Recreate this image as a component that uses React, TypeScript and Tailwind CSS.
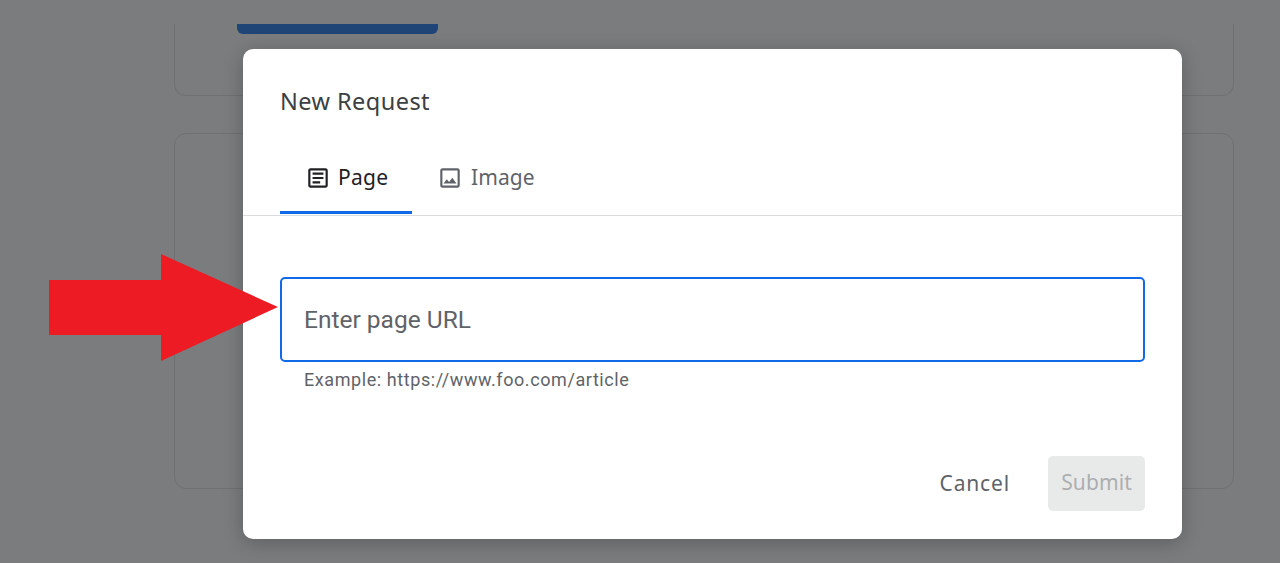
const DISPLAY_FONT = "font-['Noto_Sans',sans-serif]";

function PageIcon({ className }: { className?: string }) {
    return (
        <svg viewBox="0 0 24 24" className={className} fill="currentColor">
            <path d="M19 5v14H5V5h14m0-2H5c-1.1 0-2 .9-2 2v14c0 1.1.9 2 2 2h14c1.1 0 2-.9 2-2V5c0-1.100-.9-2-2-2z" />
            <path d="M14 17H7v-2h7v2zm3-4H7v-2h10v2zm0-4H7V7h10v2z" />
        </svg>
    );
}

function PhotoIcon({ className }: { className?: string }) {
    return (
        <svg viewBox="0 0 24 24" className={className} fill="currentColor">
            <path d="M19 5v14H5V5h14m0-2H5c-1.1 0-2 .9-2 2v14c0 1.100.9 2 2 2h14c1.100 0 2-.9 2-2V5c0-1.100-.9-2-2-2z" />
            <path d="M14.14 11.86l-3 3.870L9 13.140 6 17h12l-3.860-5.140z" />
        </svg>
    );
}

function Arrow() {
    return (
        <svg viewBox="0 0 229 108" className="absolute left-[49px] top-[254px] h-[108px] w-[229px]">
            <polygon points="0,26 112,26 112,0 229,53 112,107 112,81 0,81" fill="#ed1c24" />
        </svg>
    );
}

export default function App() {
    return (
        <div className="relative h-[563px] w-[1280px] overflow-hidden bg-[#7b7c7e] font-['Roboto',sans-serif]">
            {/* Page behind the dialog */}
            <div className="flex h-full flex-col gap-[37px] pl-[174px] pr-[46px] pt-[24px]">
                <div className="h-[72px] rounded-b-[12px] border border-t-0 border-[#707173] pl-[62px]">
                    <div className="h-[10px] w-[201px] rounded-b-[6px] bg-[#1f4577]" />
                </div>
                <div className="h-[356px] rounded-[12px] border border-[#707173]" />
            </div>

            {/* Dialog */}
            <div className="absolute left-[243px] top-[49px] flex h-[490px] w-[939px] flex-col rounded-[10px] bg-white shadow-[0_4px_20px_rgba(0,0,0,0.24)]">
                <h2 className={`pl-[37px] pt-[36px] text-[23.500px] leading-[32px] font-[450] tracking-[0.45px] text-[#3c4043] ${DISPLAY_FONT}`}>New Request</h2>

                <div className="mt-[28px] flex h-[71px] border-b border-[#dadce0] pl-[37px]">
                    <div className={`flex h-[69px] w-[132px] items-center gap-[7px] border-b-[3px] border-[#1069e6] pb-[1px] pl-[25px] text-[21px] tracking-[0.3px] text-[#202124] ${DISPLAY_FONT}`}>
                        <PageIcon className="h-[26px] w-[26px]" />
                        Page
                    </div>
                    <div className={`flex h-[69px] items-center gap-[8px] pb-[4px] pl-[25px] text-[21px] tracking-[0.1px] text-[#5f6368] ${DISPLAY_FONT}`}>
                        <PhotoIcon className="h-[26px] w-[26px]" />
                        Image
                    </div>
                </div>

                <div className="pl-[37px] pr-[37px] pt-[61px]">
                    <div className="flex h-[85px] items-center rounded-[5px] border-2 border-[#1069e6] pl-[22px] pt-[1px] text-[24.500px] text-[#5f6368]">
                        Enter page URL
                    </div>
                    <p className="mt-[7px] pl-[24px] text-[18px] leading-[21px] tracking-[0.58px] text-[#5f6368]">Example: https://www.foo.com/article</p>
                </div>

                <div className="mt-auto flex items-center justify-end gap-[19px] pb-[28px] pr-[37px]">
                    <button className={`px-[19px] text-[21px] tracking-[0.85px] text-[#5f6368] ${DISPLAY_FONT}`}>Cancel</button>
                    <button className={`h-[55px] w-[97px] rounded-[5px] bg-[#e8eaea] pb-[1px] text-[21px] tracking-[0.1px] text-[#acaeb0] ${DISPLAY_FONT}`}>Submit</button>
                </div>
            </div>

            <Arrow />
        </div>
    );
}
